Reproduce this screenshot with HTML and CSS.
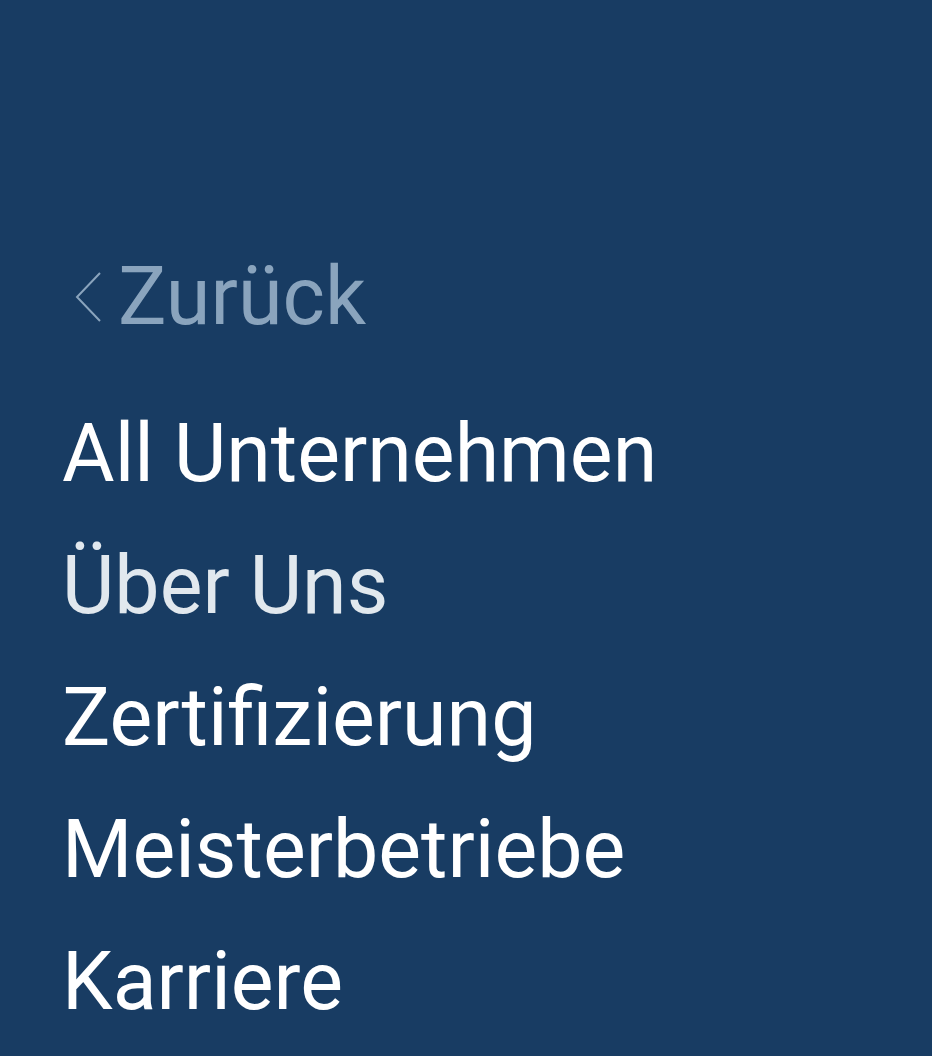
FILE: index.html
```html
<!DOCTYPE html>
<html lang="de">
<head>
<meta charset="utf-8">
<title>Menü</title>
<link rel="stylesheet" href="styles.css">
</head>
<body>
<nav class="menu">
  <a class="back" href="#">
    <svg class="chev" width="30" height="52" viewBox="0 0 30 52"><polyline points="26,2 3,26 26,50" fill="none" stroke="currentColor" stroke-width="2"/></svg>
    <span>Zurück</span>
  </a>
  <ul class="items">
    <li><a href="#">All Unternehmen</a></li>
    <li><a href="#" class="active">Über Uns</a></li>
    <li><a href="#">Zertifizierung</a></li>
    <li><a href="#">Meisterbetriebe</a></li>
    <li><a href="#">Karriere</a></li>
  </ul>
</nav>
</body>
</html>
```
FILE: styles.css
```css
html, body {
  margin: 0;
  padding: 0;
  height: 100%;
}
body {
  background: #183c63;
  font-family: Roboto, "Liberation Sans", sans-serif;
  overflow: hidden;
}
.menu {
  padding: 253px 0 0 62px;
}
.back {
  display: flex;
  align-items: center;
  gap: 14px;
  color: #8aa4bd;
  text-decoration: none;
  font-size: 81px;
  line-height: 88px;
  margin-left: 12px;
}
.chev {
  display: block;
}
.items {
  list-style: none;
  margin: 47px 0 0;
  padding: 0;
}
.items li a {
  display: block;
  color: #ffffff;
  text-decoration: none;
  font-size: 80.7px;
  line-height: 132px;
}
.items li a.active {
  color: #e1e8ee;
}
```
